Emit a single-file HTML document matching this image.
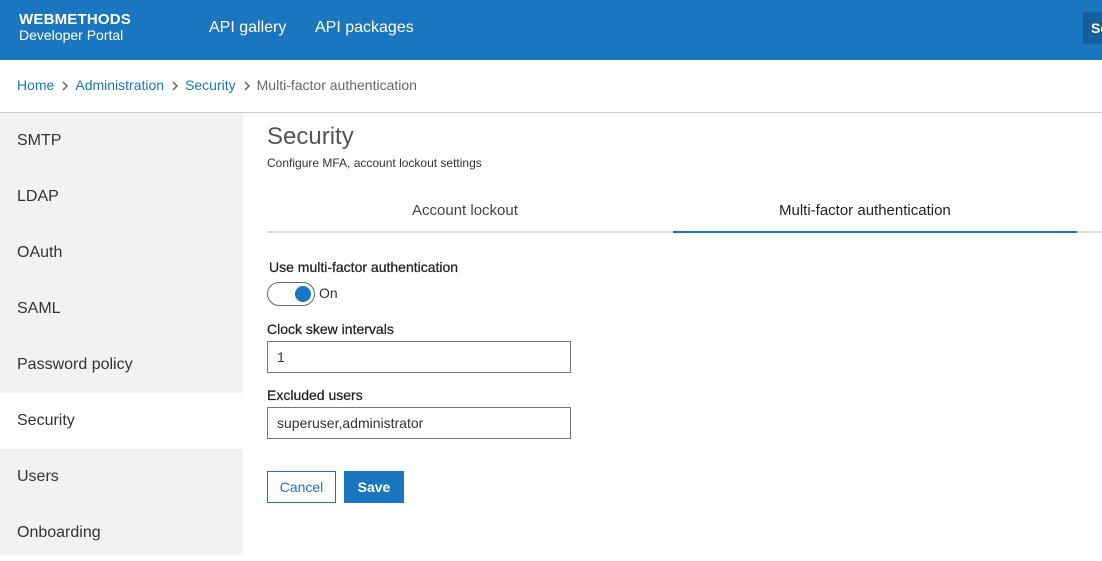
<!DOCTYPE html>
<html><head><style>
*{margin:0;padding:0;box-sizing:border-box}
body{width:1102px;height:555px;overflow:hidden;font-family:"Liberation Sans",Arial,sans-serif;background:#fff;position:relative;color:#333}
.hdr{position:absolute;left:0;top:0;width:1102px;height:60px;background:#1a76bf;color:#fff}
.a{position:absolute}
.side{position:absolute;left:0;top:113px;width:243px;height:442px;background:#f2f2f2}
.side div{height:56px;line-height:56px;padding-left:17px;font-size:16px;color:#333}
.side .on{background:#fff}
input{position:absolute;border:1px solid #777;font:14px "Liberation Sans",sans-serif;padding-left:9px;color:#333;background:#fff}
.ch{display:inline-block;width:8px;height:10px;margin:0 6px 0 7px;vertical-align:-1px}
.lbl{font-size:14px;color:#222;-webkit-text-stroke:0.25px #222}
</style></head><body>
<div class="hdr">
<div class="a" style="left:19px;top:11px;font-weight:bold;font-size:15px;letter-spacing:0.2px">WEBMETHODS</div>
<div class="a" style="left:19px;top:27px;font-size:14px">Developer Portal</div>
<div class="a" style="left:209px;top:19px;font-size:16px">API gallery</div>
<div class="a" style="left:315px;top:19px;font-size:16px">API packages</div>
<div class="a" style="left:1083px;top:12px;width:19px;height:32px;background:#155f9d;font-weight:bold;font-size:14px;line-height:32px;padding-left:8px;overflow:hidden">Se</div>
</div>
<div class="a" style="left:17px;top:77px;font-size:14px;color:#1a76bf;white-space:nowrap">Home<svg class="ch" viewBox="0 0 8 10"><path d="M2 1l4 4-4 4" fill="none" stroke="#666" stroke-width="1.5"/></svg>Administration<svg class="ch" viewBox="0 0 8 10"><path d="M2 1l4 4-4 4" fill="none" stroke="#666" stroke-width="1.5"/></svg>Security<svg class="ch" viewBox="0 0 8 10"><path d="M2 1l4 4-4 4" fill="none" stroke="#666" stroke-width="1.5"/></svg><span style="color:#666">Multi-factor authentication</span></div>
<div class="a" style="left:0;top:112px;width:1102px;height:1px;background:#ccc"></div>
<div class="side"><div>SMTP</div><div>LDAP</div><div>OAuth</div><div>SAML</div><div>Password policy</div><div class="on">Security</div><div>Users</div><div>Onboarding</div></div>
<div class="a" style="left:267px;top:123px;font-size:24px;color:#555">Security</div>
<div class="a" style="left:267px;top:156px;font-size:12px;color:#333">Configure MFA, account lockout settings</div>
<div class="a" style="left:412px;top:202px;font-size:15px;color:#444">Account lockout</div>
<div class="a" style="left:779px;top:202px;font-size:15px;color:#222">Multi-factor authentication</div>
<div class="a" style="left:267px;top:231px;width:835px;height:2px;background:#ddd"></div>
<div class="a" style="left:673px;top:231px;width:404px;height:2px;background:#1a76bf"></div>
<div class="a lbl" style="left:269px;top:259px">Use multi-factor authentication</div>
<div class="a" style="left:267px;top:282px;width:48px;height:24px;border:1px solid #666;border-radius:12px"></div>
<div class="a" style="left:295px;top:286px;width:16px;height:16px;border-radius:50%;background:#1a76bf"></div>
<div class="a" style="left:319px;top:285px;font-size:14px;color:#333">On</div>
<div class="a lbl" style="left:267px;top:321px">Clock skew intervals</div>
<input style="left:267px;top:341px;width:304px;height:32px" value="1">
<div class="a lbl" style="left:267px;top:387px">Excluded users</div>
<input style="left:267px;top:407px;width:304px;height:32px" value="superuser,administrator">
<div class="a" style="left:267px;top:471px;width:69px;height:32px;border:1px solid #1a76bf;color:#1a76bf;font-size:14px;line-height:30px;text-align:center">Cancel</div>
<div class="a" style="left:344px;top:471px;width:60px;height:32px;background:#1a76bf;color:#fff;font-weight:bold;font-size:14px;line-height:32px;text-align:center">Save</div>
</body></html>
